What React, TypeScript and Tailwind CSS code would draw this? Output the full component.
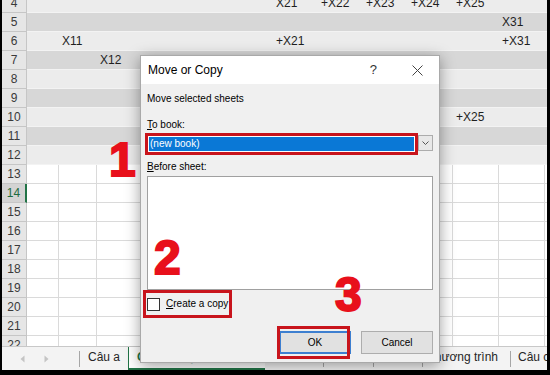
import React from "react";

const COLS = [
  "w-[32px]",
  "w-[38px]",
  "w-[45px]",
  "w-[45px]",
  "w-[44px]",
  "w-[42px]",
  "w-[45px]",
  "w-[45px]",
  "w-[45px]",
  "w-[45px]",
  "w-[46px]",
  "w-[46px]",
  "w-[50px]",
];

// row number -> column index -> text
const CELLS: Record<number, Record<number, string>> = {
  4: { 6: "X21", 7: "+X22", 8: "+X23", 9: "+X24", 10: "+X25" },
  5: { 11: "X31" },
  6: { 1: "X11", 6: "+X21", 11: "+X31" },
  7: { 2: "X12" },
  10: { 10: "+X25" },
};

const ROWS = Array.from({ length: 19 }, (_, i) => i + 4);

const Row = ({ n }: { n: number }) => {
  const data = CELLS[n] || {};
  const striped = n <= 12;
  const bg = striped ? (n % 2 === 0 ? "bg-[#ececec]" : "bg-[#d7d7d7]") : "bg-white";
  const selected = n === 14;

  return (
    <div className={`flex h-[19px] shrink-0 ${bg}`}>
      <div
        className={
          selected
            ? "w-[25px] shrink-0 flex items-center justify-center text-[12px] bg-[#d3d3d3] text-[#1e6b40] border-b border-b-[#c6c6c6] border-r-2 border-r-[#217346]"
            : "w-[25px] shrink-0 flex items-center justify-center text-[12px] bg-[#e6e6e6] text-[#3a3a3a] border-b border-r border-[#c6c6c6]"
        }
      >
        {n}
      </div>
      {COLS.map((w, i) => (
        <div
          key={i}
          className={`${w} shrink-0 flex items-center pl-[3px] text-[12px] text-[#1f1f1f] whitespace-nowrap ${
            striped ? "border-b border-[#f3f3f3]" : "border-r border-b border-[#dadada]"
          }`}
        >
          {data[i]}
        </div>
      ))}
    </div>
  );
};

const Sep = () => <div className="w-px h-[16px] bg-[#a6a6a6] self-center shrink-0" />;

const TabBar = () => (
  <div className="h-[24px] shrink-0 bg-[#f3f3f3] border-t border-[#c8c8c8] flex items-stretch text-[12px] text-[#262626] whitespace-nowrap overflow-hidden">
    <div className="w-[77px] shrink-0 flex items-center">
      <svg width="5" height="8" viewBox="0 0 5 8" className="ml-[18px]">
        <path d="M4.5 0.5 L0.5 4 L4.5 7.5 Z" fill="#c4c4c4" />
      </svg>
      <svg width="5" height="8" viewBox="0 0 5 8" className="ml-[19px]">
        <path d="M0.5 0.5 L4.5 4 L0.5 7.5 Z" fill="#c4c4c4" />
      </svg>
    </div>
    <Sep />
    <div className="w-[48px] shrink-0 flex items-center pl-[8px] pb-[3px]">Câu a</div>
    <div className="w-[137px] shrink-0 flex items-center pl-[8px] pb-[2px] bg-white border-l border-[#217346] border-b-2 border-b-[#217346] text-[#217346] font-bold">
      Câu b - hệ
    </div>
    <div className="w-[58px] shrink-0 flex items-center pl-[8px] pb-[3px]">Bài 1</div>
    <Sep />
    <div className="w-[49px] shrink-0 flex items-center pl-[8px] pb-[3px]">Bài 2</div>
    <Sep />
    <div className="w-[48px] shrink-0 flex items-center pl-[8px] pb-[3px]">Bài 3</div>
    <Sep />
    <div className="w-[87px] shrink-0 flex items-center justify-end pr-[12px] pb-[3px]">Phương trình</div>
    <Sep />
    <div className="flex items-center pl-[7px] pb-[3px]">Câu c</div>
  </div>
);

const Dialog = () => (
  <div className="absolute left-[140px] top-[55px] w-[300px] h-[308px] flex flex-col border border-[#a9a9a9] bg-[#f0f0f0] shadow-[0_3px_14px_rgba(0,0,0,0.38)] text-black">
    {/* title bar */}
    <div className="h-[28px] shrink-0 bg-white flex items-center pl-[7px]">
      <span className="flex-1 text-[12px]">Move or Copy</span>
      <span className="text-[13px] text-[#333] mr-[35px]">?</span>
      <svg width="11" height="11" viewBox="0 0 11 11" className="mr-[16px]">
        <path d="M0.5 0.5 L10.5 10.5 M10.5 0.5 L0.5 10.5" stroke="#444" strokeWidth="1" />
      </svg>
    </div>

    {/* body */}
    <div className="flex-1 flex flex-col px-[6px] text-[10px] leading-[14px]">
      <div className="mt-[8px]">Move selected sheets</div>

      <div className="mt-[12px]">
        <u className="underline-offset-1">T</u>o book:
      </div>
      <div className="mt-[3px] h-[18px] flex items-stretch">
        <div className="flex-1 bg-white border border-[#9a9a9a] p-px">
          <div className="h-full bg-[#0a78d6] text-white flex items-center pl-px">(new book)</div>
        </div>
        <div className="w-[15px] ml-[2px] mb-[2px] bg-[#e8e8e8] border border-[#acacac] flex items-center justify-center">
          <svg width="7" height="4" viewBox="0 0 7 4">
            <path d="M0.5 0.5 L3.5 3.5 L6.5 0.5" stroke="#555" strokeWidth="1" fill="none" />
          </svg>
        </div>
      </div>

      <div className="mt-[7px]">
        <u className="underline-offset-1">B</u>efore sheet:
      </div>
      <div className="mt-[2px] h-[114px] bg-white border border-[#a0a0a0]" />

      <div className="mt-[7px] flex items-center h-[14px]">
        <div className="w-[13px] h-[13px] bg-white border border-[#333]" />
        <span className="ml-[6px]">
          <u className="underline-offset-1">C</u>reate a copy
        </span>
      </div>

      <div className="mt-[20px] flex justify-end gap-[10px]">
        <div className="w-[72px] h-[23px] bg-[#e1e1e1] border-2 border-[#3d7fd0] flex items-center justify-center">
          OK
        </div>
        <div className="w-[72px] h-[23px] bg-[#e1e1e1] border border-[#adadad] flex items-center justify-center">
          Cancel
        </div>
      </div>
    </div>
  </div>
);

const App = () => {
  return (
    <div className="relative w-[550px] h-[375px] overflow-hidden bg-black pl-[2px] pr-[3px] pb-[5px] flex flex-col font-['Liberation_Sans',Arial,sans-serif]">
      <div className="flex-1 min-h-0 bg-white flex flex-col overflow-hidden">
        <div className="flex-1 min-h-0 overflow-hidden">
          <div className="-mt-[6px] flex flex-col">
            {ROWS.map((n) => (
              <Row key={n} n={n} />
            ))}
          </div>
        </div>
        <TabBar />
      </div>

      <Dialog />

      {/* annotations */}
      <div className="absolute left-[145px] top-[133px] w-[273px] h-[22px] border-[3px] border-[#c8141c] pointer-events-none" />
      <div className="absolute left-[143px] top-[290px] w-[89px] h-[28px] border-[3px] border-[#c8141c] pointer-events-none" />
      <div className="absolute left-[277px] top-[326px] w-[73px] h-[33px] border-[3px] border-[#c8141c] pointer-events-none" />

      <div className="absolute left-[109px] top-[136px] text-[48px] leading-none font-black text-[#e8101b] [-webkit-text-stroke:2px_#e8101b]">
        1
      </div>
      <div className="absolute left-[154px] top-[234px] text-[48px] leading-none font-black text-[#e8101b] [-webkit-text-stroke:2px_#e8101b]">
        2
      </div>
      <div className="absolute left-[335px] top-[271px] text-[48px] leading-none font-black text-[#e8101b] [-webkit-text-stroke:2px_#e8101b]">
        3
      </div>
    </div>
  );
};

export default App;
